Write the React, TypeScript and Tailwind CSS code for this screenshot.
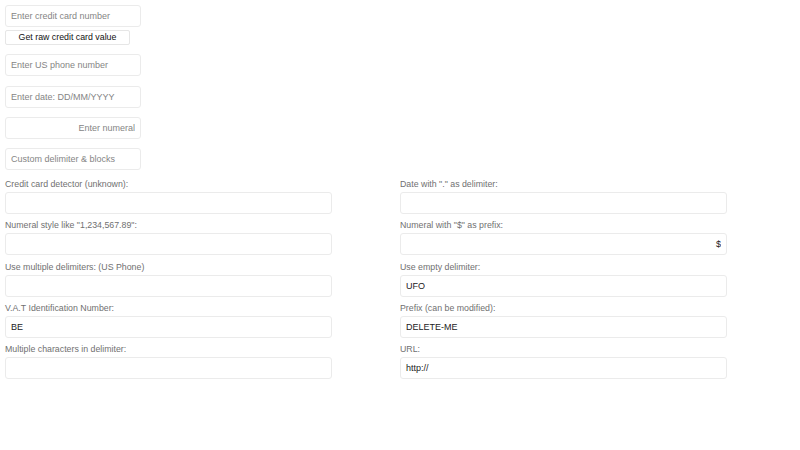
import React from "react";

const font = { fontFamily: '"Liberation Sans", Arial, sans-serif' };

const smallInput =
  "block h-[22px] w-[136px] rounded-[3px] border border-[#ebebeb] bg-white px-[5px] text-[9px] text-[#333] placeholder:text-[#858585] outline-none";
const wideInput =
  "block h-[22px] w-[327px] rounded-[3px] border border-[#ebebeb] bg-white px-[5px] text-[9px] text-[#222] placeholder:text-[#858585] outline-none";

interface FieldProps {
  label: string;
  value?: string;
  right?: boolean;
}

const Field: React.FC<FieldProps> = ({ label, value, right }) => (
  <div className="flex flex-col">
    <label className="h-[12px] text-[8.8px] leading-[12px] text-[#707070]">
      {label}
    </label>
    <input
      className={wideInput + (right ? " text-right" : "") + " mt-[2px]"}
      defaultValue={value}
    />
  </div>
);

const left: FieldProps[] = [
  { label: "Credit card detector (unknown):" },
  { label: 'Numeral style like "1,234,567.89":' },
  { label: "Use multiple delimiters: (US Phone)" },
  { label: "V.A.T Identification Number:", value: "BE" },
  { label: "Multiple characters in delimiter:" },
];

const right: FieldProps[] = [
  { label: 'Date with "." as delimiter:' },
  { label: 'Numeral with "$" as prefix:', value: "$", right: true },
  { label: "Use empty delimiter:", value: "UFO" },
  { label: "Prefix (can be modified):", value: "DELETE-ME" },
  { label: "URL:", value: "http://" },
];

export default function App() {
  return (
    <div className="min-h-[450px] w-[800px] bg-white p-[5px]" style={font}>
      <div className="flex flex-col">
        <input className={smallInput} placeholder="Enter credit card number" />
        <button className="mt-[3px] h-[15px] w-[125px] rounded-[2px] border border-[#e6e6e6] bg-white text-[8.8px] leading-[13px] text-[#111]">
          Get raw credit card value
        </button>
        <input className={smallInput + " mt-[9px]"} placeholder="Enter US phone number" />
        <input className={smallInput + " mt-[10px]"} placeholder="Enter date: DD/MM/YYYY" />
        <input className={smallInput + " mt-[9px] text-right"} placeholder="Enter numeral" />
        <input className={smallInput + " mt-[9px]"} placeholder="Custom delimiter & blocks" />
      </div>
      <div className="mt-[8px] grid grid-cols-[395px_395px]">
        <div className="flex flex-col gap-[5.3px]">
          {left.map((f) => (
            <Field key={f.label} {...f} />
          ))}
        </div>
        <div className="flex flex-col gap-[5.3px]">
          {right.map((f) => (
            <Field key={f.label} {...f} />
          ))}
        </div>
      </div>
    </div>
  );
}
